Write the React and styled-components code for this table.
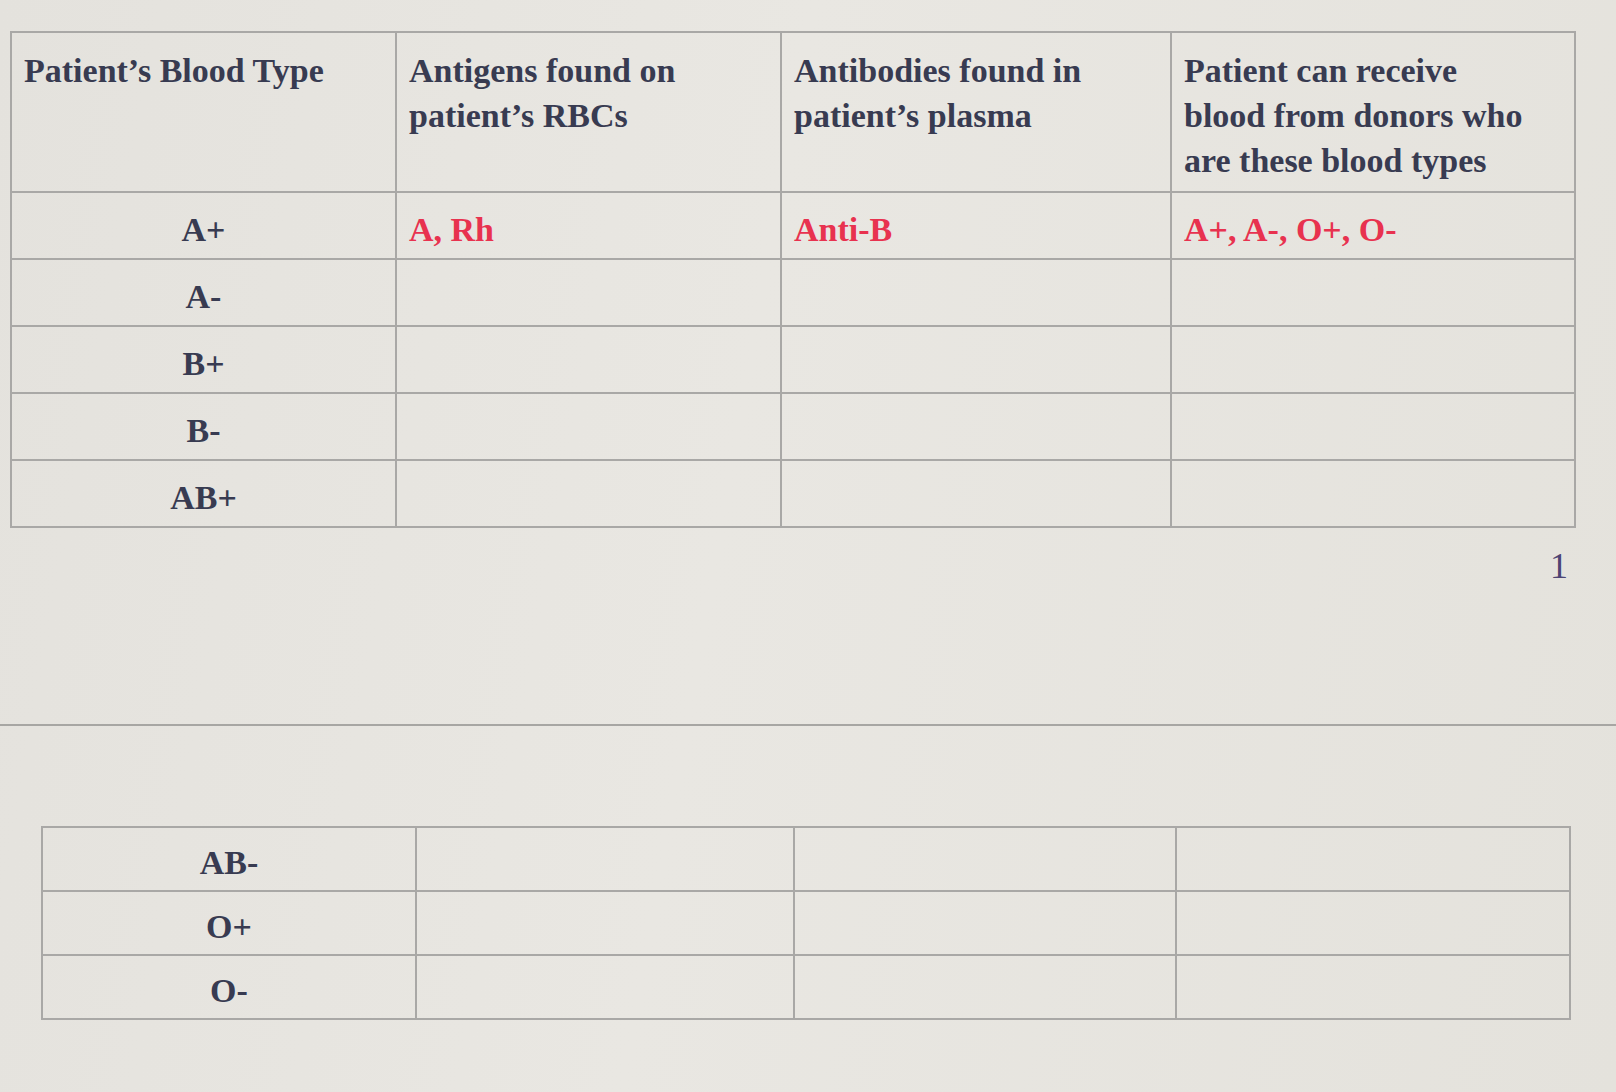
import styled, { createGlobalStyle } from "styled-components";

const GlobalStyle = createGlobalStyle`
  html, body {
    margin: 0;
    padding: 0;
    background: #e6e4df;
  }
  body {
    font-family: "Liberation Serif", "Times New Roman", serif;
    color: #383b51;
  }
`;

const Page = styled.div`
  width: 1616px;
  height: 1092px;
  overflow: hidden;
  display: flex;
  flex-direction: column;
  background: linear-gradient(100deg, #e4e2dd 0%, #e9e7e2 45%, #e4e2dc 100%);
`;

const Table = styled.table`
  border-collapse: collapse;
  table-layout: fixed;
  margin-top: ${p => p.$top}px;
  margin-left: ${p => p.$left}px;
  width: ${p => p.$width}px;
  font-size: 34px;
  font-weight: 700;
`;

const Col = styled.col`
  width: ${p => p.$w}px;
`;

const Cell = styled.td`
  border: 2px solid #a9a8a6;
  padding: 8px 12px 0;
  height: ${p => p.$h - 8}px;
  vertical-align: middle;
  text-align: ${p => (p.$center ? "center" : "left")};
  color: ${p => (p.$red ? "#e8324f" : "#383b51")};
`;

const HeadCell = styled.th`
  border: 2px solid #a9a8a6;
  padding: 15px 12px 0;
  height: 143px;
  vertical-align: top;
  text-align: left;
  font-weight: 700;
  line-height: 45px;
  color: #383b51;
`;

const PageNumber = styled.div`
  margin-top: 18px;
  padding-right: 48px;
  text-align: right;
  font-size: 36px;
  line-height: 40px;
  color: #4d4574;
`;

const Divider = styled.hr`
  margin: 138px 0 0;
  border: 0;
  border-top: 2px solid #a7a6a3;
  width: 100%;
`;

const headers = [
  ["Patient’s Blood Type"],
  ["Antigens found on", "patient’s RBCs"],
  ["Antibodies found in", "patient’s plasma"],
  ["Patient can receive", "blood from donors who", "are these blood types"],
];

const topRows = [
  { type: "A+", antigens: "A, Rh", antibodies: "Anti-B", donors: "A+, A-, O+, O-" },
  { type: "A-" },
  { type: "B+" },
  { type: "B-" },
  { type: "AB+" },
];

const bottomRows = [{ type: "AB-" }, { type: "O+" }, { type: "O-" }];

function Rows({ rows, h }) {
  return rows.map(r => (
    <tr key={r.type}>
      <Cell $h={h} $center>{r.type}</Cell>
      <Cell $h={h} $red>{r.antigens}</Cell>
      <Cell $h={h} $red>{r.antibodies}</Cell>
      <Cell $h={h} $red>{r.donors}</Cell>
    </tr>
  ));
}

export default function App() {
  return (
    <Page>
      <GlobalStyle />
      <Table $top={31} $left={10} $width={1564}>
        <colgroup>
          <Col $w={385} />
          <Col $w={385} />
          <Col $w={390} />
          <Col $w={404} />
        </colgroup>
        <thead>
          <tr>
            {headers.map(lines => (
              <HeadCell key={lines[0]}>
                {lines.map((l, i) => (
                  <span key={l}>
                    {i > 0 && <br />}
                    {l}
                  </span>
                ))}
              </HeadCell>
            ))}
          </tr>
        </thead>
        <tbody>
          <Rows rows={topRows} h={65} />
        </tbody>
      </Table>

      <PageNumber>1</PageNumber>
      <Divider />

      <Table $top={100} $left={41} $width={1528}>
        <colgroup>
          <Col $w={374} />
          <Col $w={378} />
          <Col $w={382} />
          <Col $w={394} />
        </colgroup>
        <tbody>
          <Rows rows={bottomRows} h={62} />
        </tbody>
      </Table>
    </Page>
  );
}
